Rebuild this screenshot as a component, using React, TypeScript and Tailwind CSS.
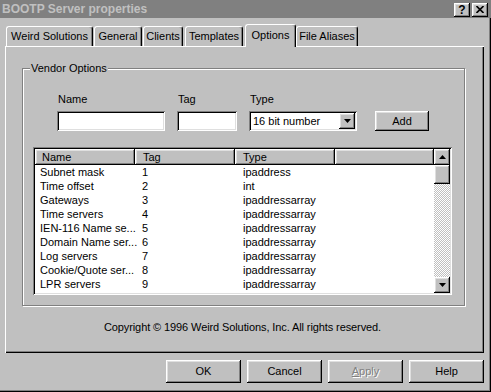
import React from "react";

const raised =
  "shadow-[inset_-1px_-1px_0_#000,inset_1px_1px_0_#fff,inset_-2px_-2px_0_#808080,inset_2px_2px_0_#dfdfdf]";
const sunken =
  "shadow-[inset_1px_1px_0_#808080,inset_-1px_-1px_0_#fff,inset_2px_2px_0_#000,inset_-2px_-2px_0_#dfdfdf]";

const rows: [string, string, string][] = [
  ["Subnet mask", "1", "ipaddress"],
  ["Time offset", "2", "int"],
  ["Gateways", "3", "ipaddressarray"],
  ["Time servers", "4", "ipaddressarray"],
  ["IEN-116 Name se...", "5", "ipaddressarray"],
  ["Domain Name ser...", "6", "ipaddressarray"],
  ["Log servers", "7", "ipaddressarray"],
  ["Cookie/Quote ser...", "8", "ipaddressarray"],
  ["LPR servers", "9", "ipaddressarray"],
  ["Impress servers", "10", "ipaddressarray"],
];

function Tab({ label, w, ml, selected }: { label: string; w: string; ml: string; selected?: boolean }) {
  return (
    <div
      className={`${w} ${ml} ${
        selected ? "h-[23px] mt-0 relative z-10 bg-[#c0c0c0] -mb-[1px]" : "h-[20px] mt-[2px]"
      } rounded-t-[3px] border-l border-t border-white border-r border-r-black shadow-[inset_-1px_0_0_#808080] flex items-center justify-center`}
    >
      <span className={selected ? "-mt-[2px]" : ""}>{label}</span>
    </div>
  );
}

function Triangle({ down }: { down?: boolean }) {
  return (
    <svg width="7" height="4" viewBox="0 0 7 4">
      {down ? <path d="M0 0H7L3.5 4Z" fill="#000" /> : <path d="M0 4H7L3.5 0Z" fill="#000" />}
    </svg>
  );
}

export default function App() {
  return (
    <div className="w-[491px] h-[392px] bg-[#c0c0c0] flex flex-col text-[11px] leading-[13px] text-black font-['Liberation_Sans',Arial,sans-serif] shadow-[inset_-1px_-1px_0_#000,inset_-2px_-2px_0_#808080] overflow-hidden">
      {/* Title bar */}
      <div className="h-[18px] bg-[#808080] flex items-center justify-between pl-[2px] pr-[3px]">
        <span className="text-[#c0c0c0] font-bold text-[12px]">BOOTP Server properties</span>
        <div className="flex gap-[2px] mt-[1px]">
          <div className={`w-[16px] h-[14px] bg-[#c0c0c0] ${raised} flex items-center justify-center font-bold text-[12px] leading-[12px]`}>
            ?
          </div>
          <div className={`w-[16px] h-[14px] bg-[#c0c0c0] ${raised} flex items-center justify-center`}>
            <svg width="8" height="7" viewBox="0 0 8 7">
              <path d="M0.5 0L7.5 7M7.5 0L0.5 7" stroke="#000" strokeWidth="1.6" />
            </svg>
          </div>
        </div>
      </div>

      {/* Tabs */}
      <div className="flex mt-[6px] h-[22px]">
        <Tab label="Weird Solutions" w="w-[87px]" ml="ml-[6px]" />
        <Tab label="General" w="w-[48px]" ml="ml-[1px]" />
        <Tab label="Clients" w="w-[40px]" ml="ml-[1px]" />
        <Tab label="Templates" w="w-[58px]" ml="ml-[2px]" />
        <Tab label="Options" w="w-[51px]" ml="ml-[2px]" selected />
        <Tab label="File Aliases" w="w-[62px]" ml="ml-0" />
      </div>

      {/* Tab panel */}
      <div className="ml-[5px] w-[479px] h-[307px] shadow-[inset_1px_1px_0_#fff,inset_-1px_-1px_0_#000,inset_-2px_-2px_0_#808080] flex flex-col">
        {/* Group box */}
        <div className="ml-[17px] mt-[22px] w-[443px] h-[238px] border border-[#808080] shadow-[1px_1px_0_#fff,inset_1px_1px_0_#fff] relative">
          <span className="absolute left-[7px] -top-[7px] bg-[#c0c0c0] px-[1px]">Vendor Options</span>

          <div className="flex mt-[24px]">
            <div className="ml-[34px] w-[108px] flex flex-col">
              <span className="ml-[1px] mb-[5px]">Name</span>
              <div className={`h-[20px] bg-white ${sunken}`} />
            </div>
            <div className="ml-[12px] w-[60px] flex flex-col">
              <span className="ml-[1px] mb-[5px]">Tag</span>
              <div className={`h-[20px] bg-white ${sunken}`} />
            </div>
            <div className="ml-[12px] w-[108px] flex flex-col">
              <span className="ml-[1px] mb-[5px]">Type</span>
              <div className={`h-[20px] bg-white ${sunken} flex items-center pl-[4px] pr-[2px]`}>
                <span className="flex-1">16 bit number</span>
                <div className={`w-[16px] h-[16px] bg-[#c0c0c0] ${raised} flex items-center justify-center`}>
                  <Triangle down />
                </div>
              </div>
            </div>
            <div className={`ml-[18px] w-[54px] h-[20px] self-end bg-[#c0c0c0] ${raised} flex items-center justify-center`}>
              Add
            </div>
          </div>

          {/* List view */}
          <div className={`ml-[10px] mt-[16px] w-[419px] h-[148px] bg-white ${sunken} p-[2px] flex`}>
            <div className="flex-1 flex flex-col overflow-hidden">
              <div className="flex h-[16px] shrink-0">
                <div className={`w-[100px] bg-[#c0c0c0] ${raised} pl-[7px] flex items-center`}>Name</div>
                <div className={`w-[100px] bg-[#c0c0c0] ${raised} pl-[8px] flex items-center`}>Tag</div>
                <div className={`w-[100px] bg-[#c0c0c0] ${raised} pl-[8px] flex items-center`}>Type</div>
                <div className={`flex-1 bg-[#c0c0c0] ${raised}`} />
              </div>
              <div className="flex flex-col">
                {rows.map(([n, t, ty]) => (
                  <div key={n} className="flex h-[14px] shrink-0 items-center">
                    <div className="w-[100px] pl-[5px] whitespace-nowrap">{n}</div>
                    <div className="w-[100px] pl-[7px]">{t}</div>
                    <div className="w-[100px] pl-[8px]">{ty}</div>
                  </div>
                ))}
              </div>
            </div>
            <div className="w-[16px] flex flex-col">
              <div className={`h-[16px] bg-[#c0c0c0] ${raised} flex items-center justify-center`}>
                <Triangle />
              </div>
              <div className={`h-[19px] bg-[#c0c0c0] ${raised}`} />
              <div className="flex-1 bg-[repeating-conic-gradient(#c0c0c0_0_25%,#fff_0_50%)] bg-[length:2px_2px]" />
              <div className={`h-[16px] bg-[#c0c0c0] ${raised} flex items-center justify-center`}>
                <Triangle down />
              </div>
            </div>
          </div>
        </div>

        <div className="mt-[15px] text-center pr-[4px] tracking-[-0.1px]">Copyright © 1996 Weird Solutions, Inc. All rights reserved.</div>
      </div>

      {/* Buttons */}
      <div className="flex gap-[6px] ml-[166px] mt-[7px]">
        <div className={`w-[75px] h-[23px] bg-[#c0c0c0] ${raised} flex items-center justify-center`}>OK</div>
        <div className={`w-[75px] h-[23px] bg-[#c0c0c0] ${raised} flex items-center justify-center`}>Cancel</div>
        <div className={`w-[75px] h-[23px] bg-[#c0c0c0] ${raised} flex items-center justify-center text-[#808080] [text-shadow:1px_1px_0_#fff]`}>
          <span>
            <span className="underline">A</span>pply
          </span>
        </div>
        <div className={`w-[75px] h-[23px] bg-[#c0c0c0] ${raised} flex items-center justify-center`}>Help</div>
      </div>
    </div>
  );
}
